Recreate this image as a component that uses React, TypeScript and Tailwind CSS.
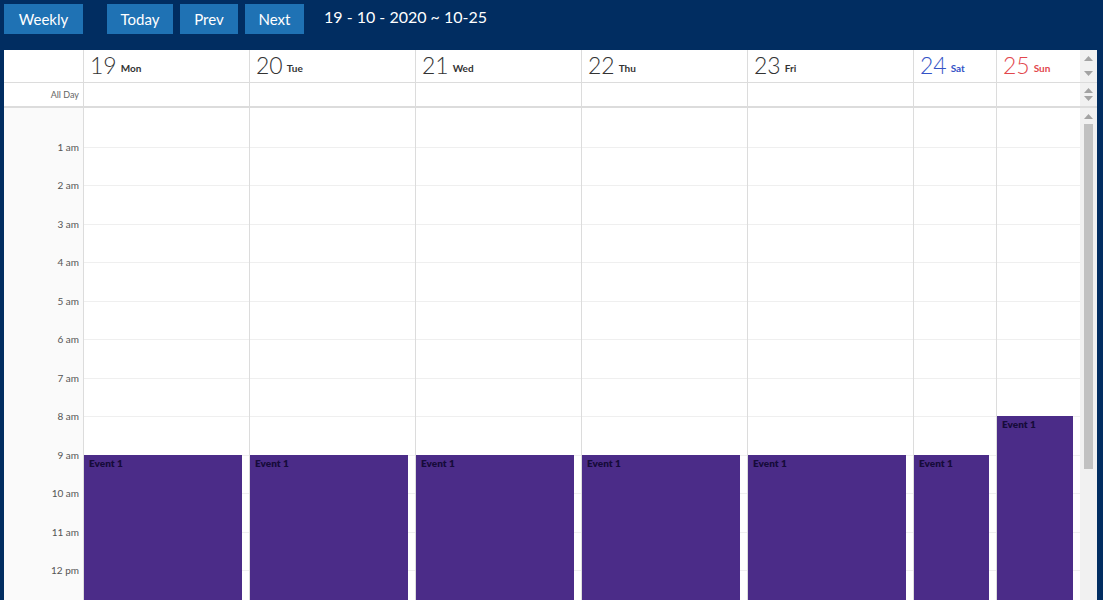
import React from "react";

type Day = { num: number; name: string; tone?: "sat" | "sun"; startHour: number };

const days: Day[] = [
  { num: 19, name: "Mon", startHour: 9 },
  { num: 20, name: "Tue", startHour: 9 },
  { num: 21, name: "Wed", startHour: 9 },
  { num: 22, name: "Thu", startHour: 9 },
  { num: 23, name: "Fri", startHour: 9 },
  { num: 24, name: "Sat", tone: "sat", startHour: 9 },
  { num: 25, name: "Sun", tone: "sun", startHour: 8 },
];

const hours = Array.from({ length: 13 }, (_, i) => i);
const ROW = 38.5;

function hourLabel(h: number) {
  if (h === 0) return "";
  if (h === 12) return "12 pm";
  return `${h} am`;
}

function toneClass(tone?: "sat" | "sun") {
  if (tone === "sat") return "text-[#3453c6]";
  if (tone === "sun") return "text-[#e2474d]";
  return "text-[#333]";
}

function Arrow({ up }: { up: boolean }) {
  return (
    <svg width="9" height="5" viewBox="0 0 9 5" className="block">
      {up ? <path d="M0 5 L4.5 0 L9 5 Z" fill="#a3a3a3" /> : <path d="M0 0 L4.5 5 L9 0 Z" fill="#a3a3a3" />}
    </svg>
  );
}

function Button({ children, className = "" }: { children: React.ReactNode; className?: string }) {
  return (
    <button className={`h-[30px] bg-[#1f72b4] text-white text-[15px] ${className}`}>{children}</button>
  );
}

export default function App() {
  return (
    <div className="w-[1103px] h-[600px] overflow-hidden bg-[#012d61] font-['Lato','Open_Sans',sans-serif]">
      {/* toolbar */}
      <div className="flex items-start pl-[4px] pt-[4px] h-[50px]">
        <Button className="w-[79px]">Weekly</Button>
        <Button className="w-[66px] ml-[24px]">Today</Button>
        <Button className="w-[58px] ml-[7px]">Prev</Button>
        <Button className="w-[59px] ml-[7px]">Next</Button>
        <div className="ml-[20px] h-[26px] flex items-center text-white text-[16px]">19 - 10 - 2020 ~ 10-25</div>
      </div>

      {/* calendar */}
      <div className="ml-[4px] w-[1093px] h-[550px] bg-white flex flex-col">
        {/* day header */}
        <div className="grid grid-cols-[80px_166px_166px_166px_166px_166px_83px_83px_17px] h-[33px] border-b border-[#dcdcdc]">
          <div className="border-r border-[#dcdcdc]" />
          {days.map((d, i) => (
            <div
              key={d.num}
              className={`flex items-end pl-[6px] pb-[3px] ${i < 6 ? "border-r border-[#dcdcdc]" : ""} ${toneClass(d.tone)}`}
            >
              <span className="text-[23px] leading-[27px] font-light">{d.num}</span>
              <span className="text-[10px] font-bold ml-[4px] mb-[3px]">{d.name}</span>
            </div>
          ))}
          <div className="bg-[#f1f1f1] flex flex-col items-center justify-between py-[6px]">
            <Arrow up />
            <Arrow up={false} />
          </div>
        </div>

        {/* all day */}
        <div className="grid grid-cols-[80px_166px_166px_166px_166px_166px_83px_83px_17px] h-[25px] border-b-[2px] border-[#dcdcdc]">
          <div className="border-r border-[#dcdcdc] flex items-center justify-end pr-[4px] text-[9px] text-[#666]">All Day</div>
          {days.map((d, i) => (
            <div key={d.num} className={i < 6 ? "border-r border-[#dcdcdc]" : ""} />
          ))}
          <div className="bg-[#f1f1f1] flex flex-col items-center justify-center gap-[3px]">
            <Arrow up />
            <Arrow up={false} />
          </div>
        </div>

        {/* time grid */}
        <div className="grid grid-cols-[80px_166px_166px_166px_166px_166px_83px_83px_17px] flex-1 overflow-hidden">
          <div className="bg-[#fafafa] border-r border-[#dcdcdc]">
            {hours.map((h) => (
              <div key={h} style={{ height: ROW }} className="flex items-end justify-end pr-[4px]">
                {h < 12 && (
                  <span className="text-[10px] leading-[12px] text-[#555] translate-y-[6px]">{hourLabel(h + 1)}</span>
                )}
              </div>
            ))}
          </div>
          {days.map((d, i) => (
            <div key={d.num} className={`relative ${i < 6 ? "border-r border-[#dcdcdc]" : ""}`}>
              {hours.map((h) => (
                <div key={h} style={{ height: ROW }} className={h > 0 ? "border-t border-[#efefef]" : ""} />
              ))}
              <div
                className="absolute left-0 right-[7px] bottom-[-200px] bg-[#4b2c88] px-[5px] pt-[1px] text-[10px] font-extrabold text-[#160b3a]"
                style={{ top: d.startHour * ROW }}
              >
                Event 1
              </div>
            </div>
          ))}
          <div className="bg-[#f1f1f1] flex flex-col items-center">
            <div className="pt-[6px] pb-[5px]">
              <Arrow up />
            </div>
            <div className="w-[9px] h-[345px] bg-[#c1c1c1]" />
          </div>
        </div>
      </div>
    </div>
  );
}
